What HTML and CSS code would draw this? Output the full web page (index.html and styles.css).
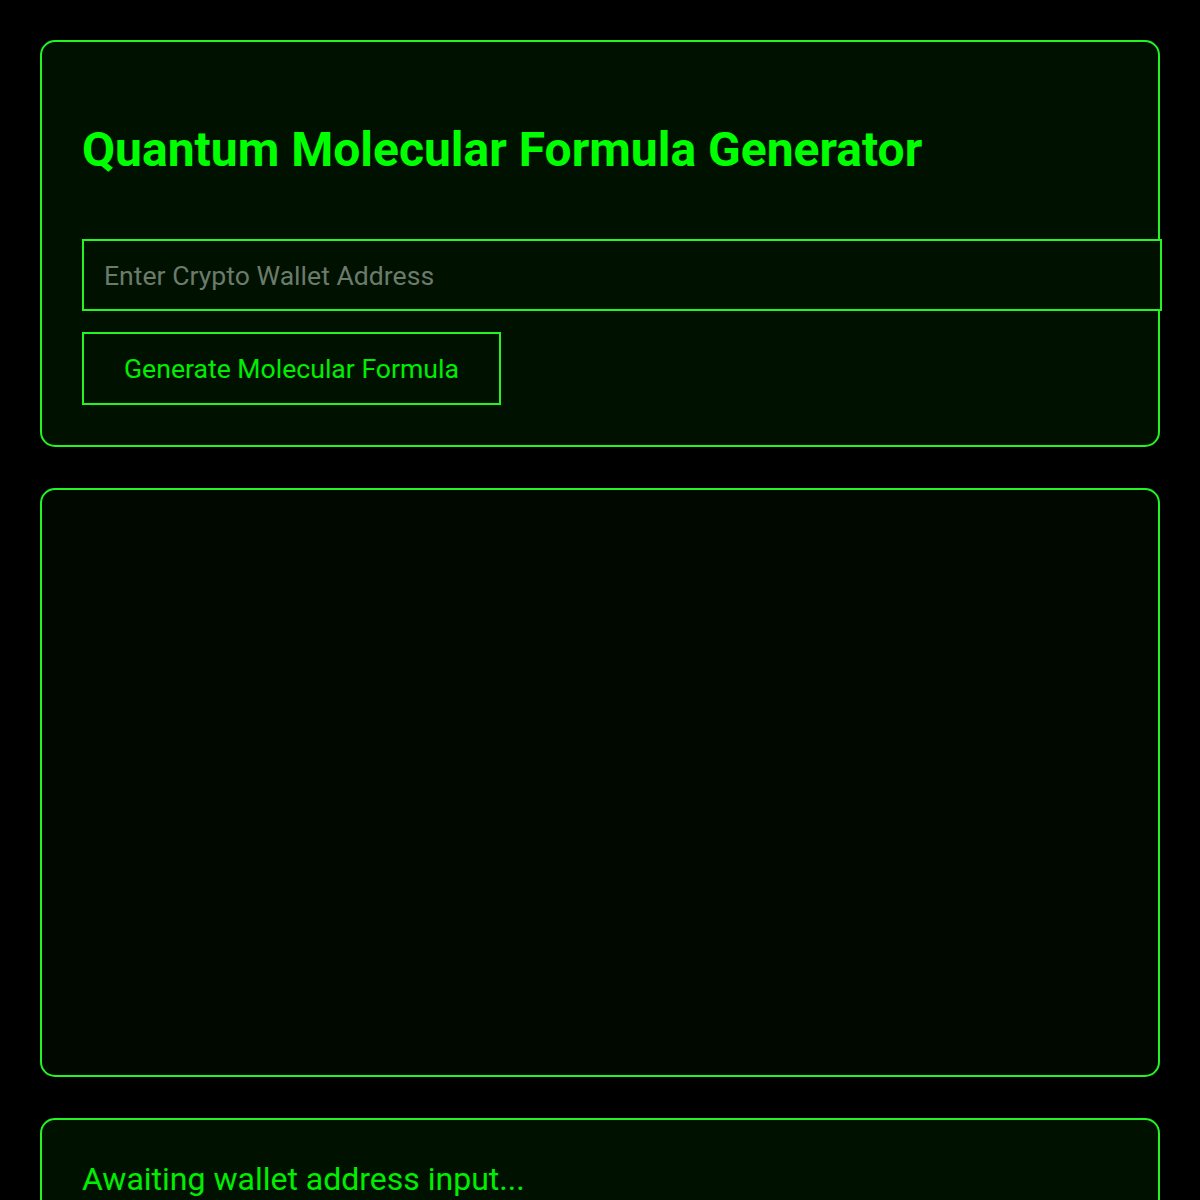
FILE: index.html
```html
<!DOCTYPE html>
<html lang="en">
<head>
<meta charset="utf-8">
<title>Quantum Molecular Formula Generator</title>
<link rel="stylesheet" href="styles.css">
</head>
<body>
<main class="container">
  <section class="card controls">
    <h1 class="title">Quantum Molecular Formula Generator</h1>
    <input class="wallet-input" type="text" placeholder="Enter Crypto Wallet Address">
    <button class="generate-btn" type="button">Generate Molecular Formula</button>
  </section>
  <section class="card viewer">
    <canvas class="molecule-canvas"></canvas>
  </section>
  <section class="card output">
    <p class="status">Awaiting wallet address input...</p>
  </section>
</main>
</body>
</html>
```
FILE: styles.css
```css
html, body {
  margin: 0;
  padding: 0;
  background: #000000;
}
body {
  font-family: Roboto, "Liberation Sans", sans-serif;
  color: #00ff00;
}
.container {
  padding: 40px;
  display: flex;
  flex-direction: column;
  gap: 41px;
}
.card {
  border: 2px solid #22f522;
  border-radius: 15px;
  background: #001100;
  padding: 40px;
}
.title {
  font-size: 48px;
  font-weight: 700;
  color: #00ff00;
  margin: 40px 0 61px 0;
  line-height: 56px;
}
.wallet-input {
  display: block;
  height: 72px;
  padding: 18px 20px;
  border: 2px solid #22f522;
  background: #001100;
  color: #00ff00;
  font-family: Roboto, "Liberation Sans", sans-serif;
  font-size: 26.6px;
  margin: 0 0 21px 0;
  outline: none;
  box-sizing: border-box;
  width: calc(100% + 44px);
}
.wallet-input::placeholder {
  color: #6b7b6b;
}
.generate-btn {
  display: block;
  height: 73px;
  padding: 0 40px;
  border: 2px solid #22f522;
  background: #001100;
  color: #00ee00;
  font-family: Roboto, "Liberation Sans", sans-serif;
  font-size: 26.6px;
  cursor: pointer;
}
.viewer {
  background: #000800;
  padding: 0;
  height: 585px;
}
.molecule-canvas {
  display: block;
  width: 100%;
  height: 100%;
}
.status {
  margin: 0;
  font-size: 32px;
  color: #00ee00;
}
```
